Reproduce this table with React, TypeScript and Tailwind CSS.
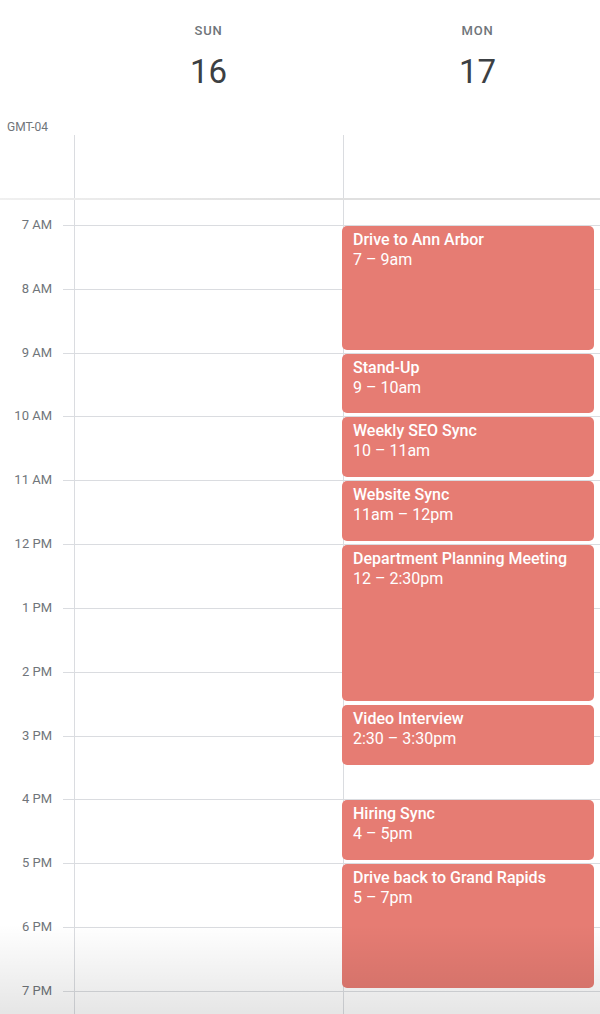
import React from "react";

const HOUR = 63.83;
const TOP_PAD = 25;

const hours = ["7 AM", "8 AM", "9 AM", "10 AM", "11 AM", "12 PM", "1 PM", "2 PM", "3 PM", "4 PM", "5 PM", "6 PM", "7 PM"];

const events = [
  { title: "Drive to Ann Arbor", time: "7 – 9am", start: 7, end: 9 },
  { title: "Stand-Up", time: "9 – 10am", start: 9, end: 10 },
  { title: "Weekly SEO Sync", time: "10 – 11am", start: 10, end: 11 },
  { title: "Website Sync", time: "11am – 12pm", start: 11, end: 12 },
  { title: "Department Planning Meeting", time: "12 – 2:30pm", start: 12, end: 14.5 },
  { title: "Video Interview", time: "2:30 – 3:30pm", start: 14.5, end: 15.5 },
  { title: "Hiring Sync", time: "4 – 5pm", start: 16, end: 17 },
  { title: "Drive back to Grand Rapids", time: "5 – 7pm", start: 17, end: 19 },
];

function DayColumn({ withEvents }: { withEvents?: boolean }) {
  return (
    <div className="relative w-[269px] shrink-0 border-l border-[#dadce0] pt-[25px]">
      {hours.map((h) => (
        <div key={h} className="h-[63.83px] border-t border-[#dadce0]" />
      ))}
      {withEvents &&
        events.map((e) => (
          <div
            key={e.title}
            className="absolute left-[-2px] w-[252px] rounded-[5px] bg-[#e67c73] px-[11px] pt-[4px] text-[16px] leading-[20px] text-white"
            style={{
              top: TOP_PAD + (e.start - 7) * HOUR + 1,
              height: (e.end - e.start) * HOUR - 4,
            }}
          >
            <div className="font-medium">{e.title}</div>
            <div>{e.time}</div>
          </div>
        ))}
    </div>
  );
}

export default function App() {
  return (
    <div
      className="relative h-[1014px] w-[600px] overflow-hidden bg-white"
      style={{ fontFamily: "Roboto, 'Noto Sans', sans-serif" }}
    >
      {/* Header */}
      <div className="flex h-[135px]">
        <div className="relative w-[74px] shrink-0">
          <div className="absolute left-[7px] top-[119px] text-[12px] leading-[16px] text-[#70757a]">GMT-04</div>
        </div>
        {[
          { d: "SUN", n: "16" },
          { d: "MON", n: "17" },
        ].map((x) => (
          <div key={x.d} className="flex w-[269px] shrink-0 flex-col items-center pt-[22px]">
            <div className="text-[13px] font-medium leading-[18px] tracking-[0.8px] text-[#70757a]">{x.d}</div>
            <div className="mt-[12px] text-[33px] leading-[40px] text-[#3c4043]">{x.n}</div>
          </div>
        ))}
      </div>

      {/* All-day area */}
      <div className="flex h-[63px]">
        <div className="w-[74px] shrink-0" />
        <div className="w-[269px] shrink-0 border-l border-[#dadce0]" />
        <div className="w-[269px] shrink-0 border-l border-[#dadce0]" />
      </div>
      <div className="h-[2px] bg-gradient-to-r from-[#f0f0f0] via-[#e0e0e0] to-[#e0e0e0]" />

      {/* Time grid */}
      <div className="flex">
        <div className="w-[74px] shrink-0 pt-[25px]">
          {hours.map((h) => (
            <div key={h} className="flex h-[63.83px]">
              <div className="relative w-[63px] shrink-0">
                <div className="absolute right-[11px] top-[-9px] whitespace-nowrap text-[13px] leading-[18px] text-[#70757a]">{h}</div>
              </div>
              <div className="flex-1 border-t border-[#dadce0]" />
            </div>
          ))}
        </div>
        <DayColumn />
        <DayColumn withEvents />
      </div>

      {/* bottom shade */}
      <div className="pointer-events-none absolute bottom-0 left-0 right-0 h-[90px] bg-gradient-to-b from-transparent to-black/10" />
    </div>
  );
}
